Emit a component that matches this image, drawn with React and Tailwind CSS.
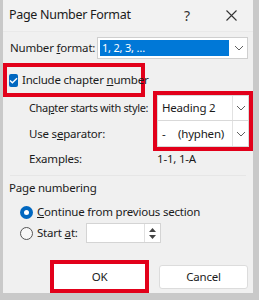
import React from "react";

function Chevron() {
  return (
    <svg width="10" height="6" viewBox="0 0 10 6" className="text-[#606060]">
      <path d="M1 1 L5 5 L9 1" fill="none" stroke="currentColor" strokeWidth="1" />
    </svg>
  );
}

function Combo({ children, className = "" }) {
  return (
    <div className={`flex bg-white border border-[#d9d9d9] ${className}`}>
      <div className="flex-1 flex items-center pl-[4px] text-[#1a1a1a] whitespace-nowrap">{children}</div>
      <div className="w-[16px] border-l border-[#e2e2e2] flex items-center justify-center">
        <Chevron />
      </div>
    </div>
  );
}

function Radio({ checked }) {
  if (checked) {
    return (
      <div className="w-[13px] h-[13px] rounded-full bg-[#0067c0] flex items-center justify-center">
        <div className="w-[5px] h-[5px] rounded-full bg-white" />
      </div>
    );
  }
  return <div className="w-[13px] h-[13px] rounded-full border border-[#555] bg-[#f7f7f7]" />;
}

export default function App() {
  return (
    <div className="w-[259px] h-[300px] bg-[#c9c9c9] pl-[3px] pr-[6px] pb-[7px] text-[11.5px] tracking-[-0.2px] text-[#1b1b1b] whitespace-nowrap font-['Noto_Sans',sans-serif]">
      <div className="h-full bg-[#f0f0f0] flex flex-col">
        {/* title bar */}
        <div className="h-[32px] flex items-center pl-[6px] pr-[16px] bg-[#f2f2f2] border-b border-[#e9e9e9]">
          <span className="flex-1 text-[12.5px] tracking-[-0.3px] leading-none">Page Number Format</span>
          <span className="text-[14px] leading-none text-[#333]">?</span>
          <svg width="11" height="11" viewBox="0 0 11 11" className="ml-[36px]">
            <path d="M0.5 0.5 L10.5 10.5 M10.5 0.5 L0.5 10.5" stroke="#333" strokeWidth="1.1" />
          </svg>
        </div>

        {/* number format */}
        <div className="mt-[5px] flex items-center h-[22px] pl-[7px]">
          <span className="w-[87px]">
            Number <span className="underline">f</span>ormat:
          </span>
          <div className="w-[151px] h-[22px] flex bg-white border border-[#cfcfcf]">
            <div className="flex-1 flex items-center p-[2px]">
              <div className="w-full h-full bg-[#0078d7] text-white flex items-center pl-[2px] text-[11px]">
                1, 2, 3, …
              </div>
            </div>
            <div className="w-[16px] flex items-center justify-center">
              <Chevron />
            </div>
          </div>
        </div>

        {/* include chapter number */}
        <div className="mt-[4px] w-[142px] h-[34px] border-[4px] border-[#e2001a] flex items-center pl-[2px]">
          <div className="w-[13px] h-[13px] rounded-[2px] bg-[#0067c0] flex items-center justify-center">
            <svg width="9" height="7" viewBox="0 0 9 7">
              <path d="M1 3.5 L3.4 5.8 L8 1.2" fill="none" stroke="white" strokeWidth="1.3" />
            </svg>
          </div>
          <span className="ml-[4px]">
            Include chapter <span className="underline">n</span>umber
          </span>
        </div>

        {/* chapter style + separator */}
        <div className="-mt-[6px] flex">
          <div className="w-[150px] pt-[4px] pl-[26px]">
            <div className="h-[26px] flex items-center">
              <span className="text-[11px] tracking-[-0.35px]">
                Cha<span className="underline">p</span>ter starts with style:
              </span>
            </div>
            <div className="h-[26px] flex items-center">
              <span>
                Use s<span className="underline">e</span>parator:
              </span>
            </div>
          </div>
          <div className="w-[100px] h-[60px] border-[4px] border-[#e2001a] flex flex-col">
            <Combo className="h-[26px]">Heading 2</Combo>
            <Combo className="h-[26px] border-t-0">
              <span className="w-[16px]">-</span>(hyphen)
            </Combo>
          </div>
        </div>

        {/* examples */}
        <div className="h-[14px] flex items-center pl-[26px] mt-[1px]">
          <span className="w-[128px]">Examples:</span>
          <span>1-1, 1-A</span>
        </div>

        <div className="mt-[9px] mx-[7px] h-px bg-[#e6e6e6]" />

        <div className="h-[24px] flex items-center pl-[6px]">Page numbering</div>

        <div className="mt-[2px] h-[20px] flex items-center pl-[17px]">
          <Radio checked />
          <span className="ml-[4px]">
            <span className="underline">C</span>ontinue from previous section
          </span>
        </div>

        <div className="mt-[1px] h-[20px] flex items-center pl-[17px]">
          <Radio />
          <span className="ml-[4px] w-[49px]">
            Start <span className="underline">a</span>t:
          </span>
          <div className="w-[75px] h-[20px] flex bg-white border border-[#d4d4d4]">
            <div className="flex-1" />
            <div className="w-[16px] border-l border-[#e0e0e0] flex flex-col items-center justify-center gap-[3px]">
              <svg width="7" height="4" viewBox="0 0 7 4"><path d="M0 4 L3.5 0 L7 4 Z" fill="#444" /></svg>
              <svg width="7" height="4" viewBox="0 0 7 4"><path d="M0 0 L3.5 4 L7 0 Z" fill="#444" /></svg>
            </div>
          </div>
        </div>

        {/* buttons */}
        <div className="mt-[17px] flex pl-[47px]">
          <div className="w-[99px] h-[33px] border-[4px] border-[#e2001a]">
            <div className="h-full bg-white flex items-center justify-center">OK</div>
          </div>
          <div className="ml-[10px] mt-[5px] w-[89px] h-[24px] bg-white border border-[#dcdcdc] rounded-[3px] flex items-center justify-center">
            Cancel
          </div>
        </div>
      </div>
    </div>
  );
}
